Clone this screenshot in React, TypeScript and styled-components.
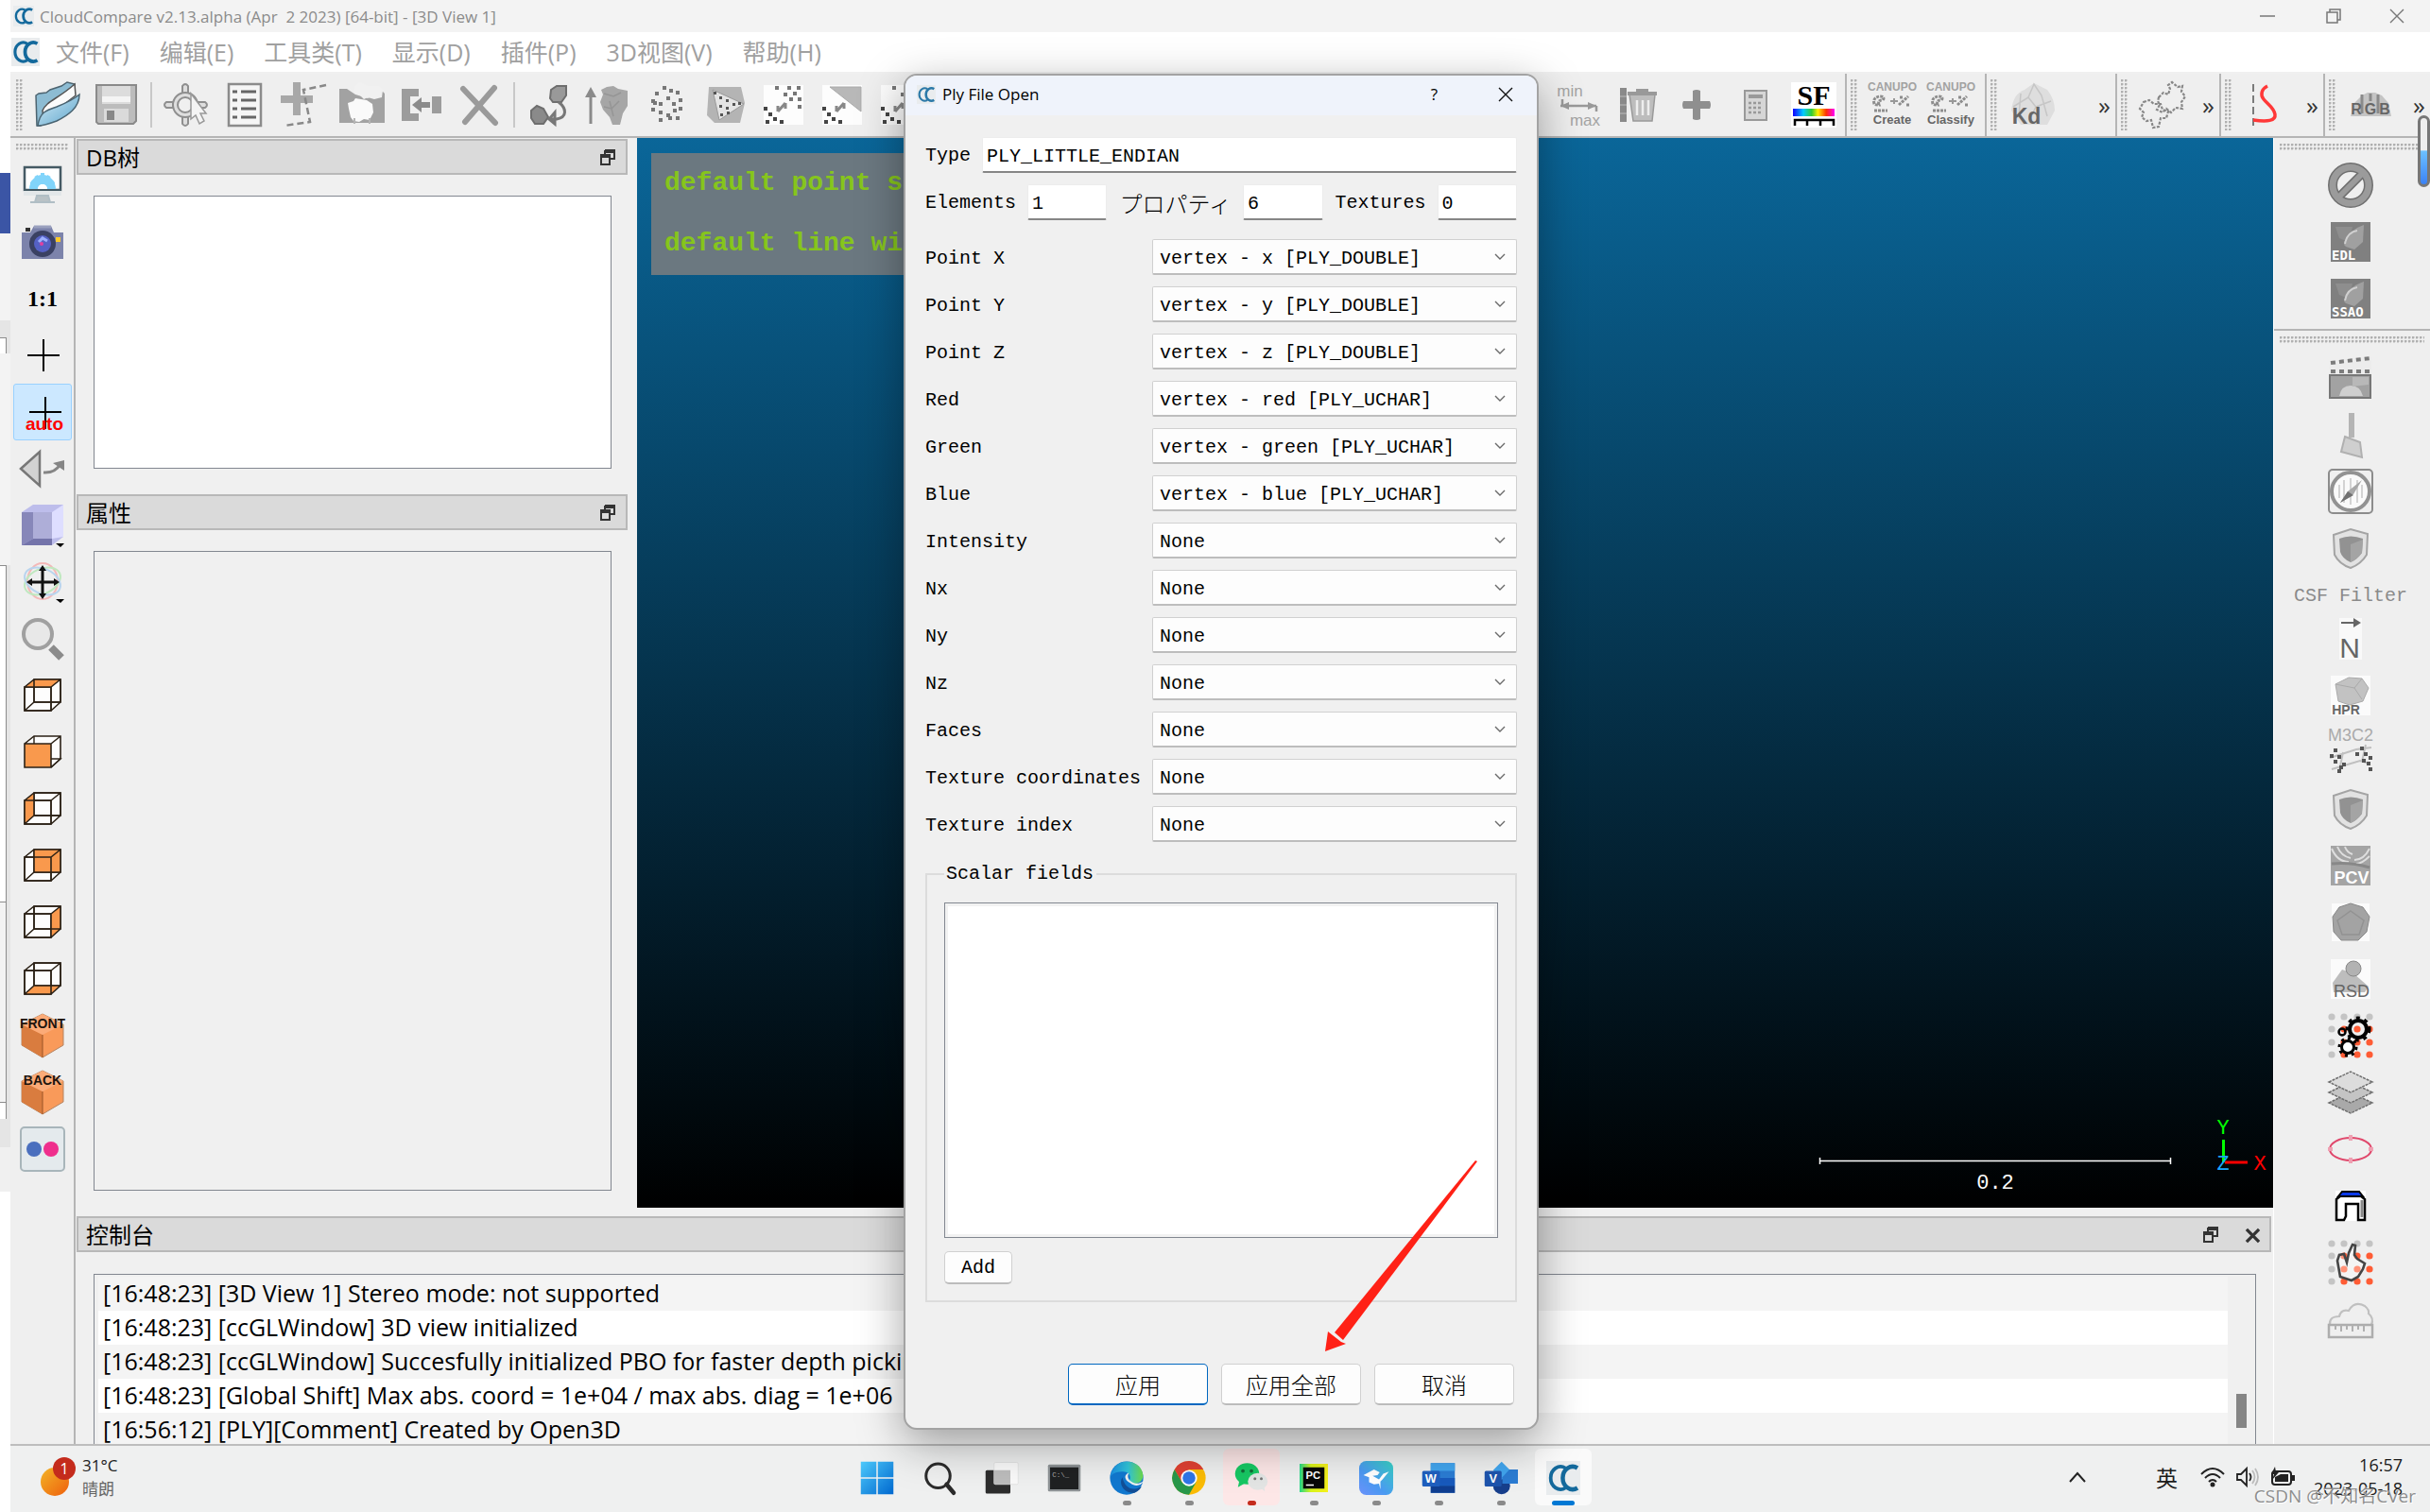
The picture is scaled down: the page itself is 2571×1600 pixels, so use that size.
import React, { ReactNode } from "react";
import styled, { createGlobalStyle } from "styled-components";

const ui = `"Open Sans", "Noto Sans CJK SC", sans-serif`;
const mono = `"Liberation Mono", "Noto Sans CJK SC", monospace`;

const GlobalStyle = createGlobalStyle`
  * { box-sizing: border-box; }
  body { margin: 0; background: #fff; font-family: ${ui}; overflow: hidden; }
  button, input, select { font: inherit; color: inherit; }
  svg { display: block; overflow: visible; }
`;

/* ---------- frame ---------- */
const Desktop = styled.div`
  display: flex;
  height: 100vh;
  position: relative;
`;
const Behind = styled.div`
  width: 11px;
  flex: none;
  display: flex;
  flex-direction: column;
`;
const Slice = styled.div<{ $h: number; $c: string; $edge?: boolean }>`
  height: ${p => p.$h}px;
  flex: none;
  background: ${p => p.$c};
  border-right: ${p => (p.$edge ? "4px solid #e5e5e5" : "none")};
  box-shadow: ${p => (p.$edge ? "inset -1px 0 #8c8c8c, inset 0 1px #8c8c8c" : "none")};
`;
const Screen = styled.div`
  flex: 1;
  min-width: 0;
  display: flex;
  flex-direction: column;
`;
const TitleBar = styled.header`
  height: 34px;
  flex: none;
  display: flex;
  align-items: center;
  background: #f3f3f3;
  color: #8b8b8b;
  padding: 0 27px 0 3px;
  gap: 6px;
  font-size: 17px;
  white-space: pre;
`;
const Spacer = styled.div`flex: 1;`;
const WindowButtons = styled.div`
  display: flex;
  gap: 48px;
`;
const PlainButton = styled.button`
  border: 0;
  padding: 0;
  background: none;
  display: flex;
  align-items: center;
  justify-content: center;
`;
const MenuBar = styled.nav`
  height: 44px;
  flex: none;
  display: flex;
  align-items: center;
  gap: 32px;
  background: #fff;
  border-bottom: 2px solid #f0f0f0;
  padding-left: 1px;
`;
const MenuItem = styled(PlainButton)`
  color: #a0a0a0;
  font-size: 25px;
  line-height: 42px;
`;
const MenuLead = styled.div`
  display: flex;
  align-items: center;
  gap: 17px;
`;

/* ---------- toolbars ---------- */
const TopBars = styled.div`
  height: 68px;
  flex: none;
  display: flex;
  background: #efefef;
  border-bottom: 2px solid #b5b5b5;
`;
const BarGroup = styled.div<{ $w?: number }>`
  ${p => (p.$w ? `width: ${p.$w}px; flex: none;` : "flex: 1; min-width: 0;")}
  display: flex;
  align-items: center;
  padding: ${p => (p.$w ? "0 0 0 4px" : "0 2px 0 6px")};
  border-right: 2px solid #b5b5b5;
  &:last-child { border-right: 0; }
`;
const Grip = styled.div<{ $flat?: boolean }>`
  flex: none;
  width: ${p => (p.$flat ? "auto" : "8px")};
  height: ${p => (p.$flat ? "8px" : "54px")};
  margin: ${p => (p.$flat ? "6px 6px 6px" : "0 5px 0 0")};
  background: radial-gradient(circle at 1px 1px, #b0b0b0 1px, transparent 2px) 0 0 / 4px 4px;
`;
const ToolButton = styled(PlainButton)`
  flex: none;
  width: 62px;
  height: 60px;
`;
const Separator = styled.div`
  width: 2px;
  height: 48px;
  margin: 0 5px;
  background: #c8c8c8;
`;
const More = styled(PlainButton)`
  margin-left: auto;
  padding-right: 5px;
  font-size: 26px;
  line-height: 30px;
  color: #333;
`;
const Body = styled.div`
  flex: 1;
  min-height: 0;
  display: flex;
  background: #f0f0f0;
`;
const SideBar = styled.aside<{ $w: number; $right?: boolean }>`
  width: ${p => p.$w}px;
  flex: none;
  display: flex;
  flex-direction: column;
  background: #efefef;
  border-right: ${p => (p.$right ? "none" : "2px solid #b5b5b5")};
  border-left: ${p => (p.$right ? "1px solid #fff" : "none")};
`;
const SideButton = styled(PlainButton)<{ $on?: boolean }>`
  flex: none;
  width: ${p => (p.$on ? "62px" : "auto")};
  height: 60px;
  margin: 0 ${p => (p.$on ? "auto" : "0")};
  flex-direction: column;
  background: ${p => (p.$on ? "#cce8ff" : "none")};
  border: ${p => (p.$on ? "1px solid #99d1ff" : "0")};
  border-radius: 3px;
  ${SideBar} > &:not([aria-pressed="true"]) { align-self: stretch; }
`;
const SideText = styled.button`
  border: 0;
  background: none;
  padding: 4px 0 0;
  height: 36px;
  flex: none;
  font-family: ${mono};
  font-size: 20px;
  color: #8a8a8a;
`;
const SideRule = styled.hr`
  width: 100%;
  height: 2px;
  margin: 2px 0 0;
  border: 0;
  flex: none;
  background: #b5b5b5;
`;
const PluginStack = styled.div`
  display: flex;
  flex-direction: column;
  padding-right: 3px;
`;

/* ---------- docks ---------- */
const Center = styled.main`
  flex: 1;
  min-width: 0;
  display: flex;
  flex-direction: column;
`;
const Upper = styled.div`
  flex: 1;
  min-height: 0;
  display: flex;
`;
const LeftDock = styled.div`
  width: 594px;
  flex: none;
  display: flex;
  flex-direction: column;
  padding: 1px 10px 0 1px;
`;
const DockHeader = styled.h2`
  margin: 0;
  height: 38px;
  flex: none;
  display: flex;
  align-items: center;
  gap: 28px;
  padding: 2px 10px 0 8px;
  font-size: 24px;
  line-height: 32px;
  font-weight: 400;
  background: #dadada;
  border: 2px solid #b8b8b8;
  color: #000;
`;
const DockBody = styled.div<{ $grow?: boolean; $fill: string }>`
  flex: ${p => (p.$grow ? "1" : "none")};
  height: ${p => (p.$grow ? "auto" : "289px")};
  margin: ${p => (p.$grow ? "22px 17px 18px 18px" : "22px 17px 27px 18px")};
  border: 1px solid #828790;
  background: ${p => p.$fill};
`;
const View = styled.section`
  flex: 1;
  min-width: 0;
  position: relative;
  background: linear-gradient(#0a6699, #000);
  padding: 16px 15px;
`;
const Notice = styled.div`
  width: 420px;
  height: 129px;
  padding-left: 14px;
  background: #6b7880;
  color: #86c51c;
  font-family: ${mono};
  font-weight: 700;
  font-size: 28px;
  line-height: 64px;
  white-space: pre;
  overflow: hidden;
`;
const ScaleOverlay = styled.svg`
  position: absolute;
  right: 0;
  bottom: 0;
  font-family: ${mono};
`;
const Console = styled.section`
  height: 250px;
  flex: none;
  padding: 9px 2px 0 1px;
  display: flex;
  flex-direction: column;
  overflow: hidden;
`;
const LogBox = styled.div`
  flex: 1;
  margin: 23px 16px 0 18px;
  border: 1px solid #828790;
  border-bottom: 0;
  padding: 2px 0 0 4px;
  display: flex;
  overflow: hidden;
`;
const LogList = styled.ul`
  flex: 1;
  margin: 0;
  padding: 0;
  list-style: none;
  background: #fff;
  height: 180px;
`;
const LogLine = styled.li`
  height: 36px;
  line-height: 34px;
  padding-left: 5px;
  font-size: 25px;
  white-space: pre;
  &:nth-child(odd) { background: #f4f4f4; }
`;
const LogScroll = styled.div`
  width: 29px;
  display: flex;
  justify-content: center;
  padding-top: 124px;
`;
const LogThumb = styled.div`
  width: 11px;
  height: 36px;
  background: #858585;
`;
const EdgeThumb = styled.div`
  position: absolute;
  right: 0;
  top: 122px;
  width: 13px;
  height: 76px;
  border: 3px solid #777;
  border-radius: 7px;
  background: linear-gradient(#eee 48%, #6cc0ff 50%, #3b82f6);
`;

/* ---------- dialog ---------- */
const Dialog = styled.form`
  position: absolute;
  left: 956px;
  top: 78px;
  width: 672px;
  border: 2px solid #a3a3a3;
  border-radius: 14px;
  background: #f0f0f0;
  font-family: ${mono};
  font-size: 20px;
  box-shadow: 0 14px 48px rgba(0, 0, 0, 0.36);
  padding-bottom: 24px;
`;
const DialogTitle = styled.div`
  height: 42px;
  display: flex;
  align-items: center;
  gap: 7px;
  padding: 0 25px 3px 12px;
  background: #eff3fb;
  border-radius: 12px 12px 0 0;
  font-family: ${ui};
  font-size: 17px;
`;
const DialogBody = styled.div`
  padding: 23px 21px 0;
`;
const FieldRow = styled.div`
  display: flex;
  align-items: center;
  height: 38px;
  margin-bottom: 12px;
`;
const Label = styled.label<{ $gap?: boolean; $kana?: boolean }>`
  margin-left: ${p => (p.$gap ? "13px" : "0")};
  margin-right: 12px;
  padding-top: 2px;
  font-size: ${p => (p.$kana ? "24px" : "20px")};
  line-height: 36px;
  font-family: ${p => (p.$kana ? `"Noto Sans CJK JP", sans-serif` : mono)};
  font-weight: ${p => (p.$kana ? 300 : 400)};
`;
const TextBox = styled.input`
  flex: 1;
  width: 0;
  height: 38px;
  border: 1px solid #ececec;
  border-bottom: 2px solid #868686;
  border-radius: 2px;
  background: #fff;
  padding: 4px 4px 0;
  outline: 0;
`;
const Mappings = styled.div`
  display: grid;
  grid-template-columns: 240px 1fr;
  row-gap: 12px;
  margin-top: 20px;
`;
const MapLabel = styled.label`
  line-height: 42px;
  height: 38px;
  white-space: nowrap;
`;
const SelectWrap = styled.div`
  display: grid;
  align-items: center;
  & > * { grid-area: 1 / 1; }
  & > svg { justify-self: end; margin-right: 12px; pointer-events: none; }
`;
const Select = styled.select`
  appearance: none;
  height: 38px;
  width: 100%;
  border: 1px solid #d0d0d0;
  border-bottom: 2px solid #bdbdbd;
  border-radius: 2px;
  background: #fdfdfd;
  padding: 3px 7px 0;
  outline: 0;
`;
const Fields = styled.fieldset`
  margin: 21px 0 0;
  padding: 17px 18px 17px;
  border: 2px solid #dcdcdc;
`;
const Legend = styled.legend`
  padding: 0 3px 0 2px;
  line-height: 26px;
`;
const FieldList = styled.div`
  height: 355px;
  border: 1px solid #828790;
  background: #fff;
  box-shadow: inset 0 0 0 3px #f2f2f2;
`;
const Button = styled.button<{ $w: number; $main?: boolean }>`
  width: ${p => p.$w}px;
  height: ${p => (p.$w > 100 ? 44 : 35)}px;
  border: 1px solid ${p => (p.$main ? "#0067c0" : "#d0d0d0")};
  border-bottom-width: 2px;
  border-bottom-color: ${p => (p.$main ? "#0067c0" : "#bcbcbc")};
  border-radius: 5px;
  background: #fdfdfd;
  padding: 0;
`;
const AddRow = styled.div`
  margin-top: 14px;
`;
const Actions = styled.div`
  display: flex;
  justify-content: flex-end;
  gap: 14px;
  padding-right: 3px;
  margin-top: 65px;
  font-size: 24px;
  font-weight: 300;
`;
const Arrow = styled.svg`
  position: absolute;
  right: 61px;
  bottom: 81px;
  pointer-events: none;
`;

/* ---------- taskbar ---------- */
const TaskBar = styled.footer`
  height: 72px;
  flex: none;
  display: grid;
  grid-template-columns: 1fr auto 1fr;
  align-items: center;
  background: #eff0f0;
  border-top: 2px solid #bdbdbd;
  padding-bottom: 5px;
  position: relative;
`;
const Weather = styled.div`
  display: flex;
  align-items: center;
  gap: 7px;
  padding-left: 31px;
  font-size: 17px;
  line-height: 25px;
  color: #222;
`;
const Second = styled.div`
  color: #666;
`;
const Apps = styled.div`
  display: flex;
`;
const AppButton = styled(PlainButton)<{ $bg?: string; $dot?: string; $wide?: boolean }>`
  width: 60px;
  height: 60px;
  margin: 0 3px;
  flex-direction: column;
  justify-content: flex-end;
  gap: 6px;
  border-radius: 6px;
  background: ${p => p.$bg || "none"};
  &::after {
    content: "";
    width: ${p => (p.$wide ? "24px" : "9px")};
    height: 5px;
    border-radius: 3px;
    background: ${p => p.$dot || "transparent"};
  }
`;
const AppGlyph = styled.span`
  & > svg { width: 36px; height: 36px; }
`;
const Tray = styled.div`
  display: flex;
  align-items: center;
  justify-content: flex-end;
  gap: 12px;
  padding-right: 29px;
  font-size: 23px;
  color: #1b1b1b;
`;
const InputMode = styled(PlainButton)`
  margin-right: 12px;
`;
const TrayGap = styled.div`
  width: 50px;
`;
const Clock = styled.time`
  font-size: 18px;
  line-height: 25px;
  text-align: right;
  margin-left: 8px;
`;
const Watermark = styled.div`
  position: absolute;
  right: 15px;
  bottom: 4px;
  font-size: 19px;
  line-height: 26px;
  color: #8d8d8d;
  text-shadow: 1px 1px #fff;
`;

/* ---------- icons ---------- */
type IconProps = { s?: number; children?: ReactNode };
const I = ({ s = 48, children }: IconProps) => (
  <svg width={s} height={s} viewBox="0 0 48 48" fill="none" aria-hidden="true">{children}</svg>
);
const T = ({ x, y, z, f = "#666", b = true, children }: { x: number; y: number; z: number; f?: string; b?: boolean; children: string }) => (
  <text x={x} y={y} fontSize={z} fill={f} fontWeight={b ? 700 : 400} textAnchor="middle" fontFamily="Liberation Sans, sans-serif">{children}</text>
);
const Logo = ({ s = 26, c = "#13699c" }: { s?: number; c?: string }) => (
  <I s={s}>
    <rect width="48" height="48" fill="#e9ecee" />
    <path d="M27 10A14 16 0 1 0 27 38" stroke={c} strokeWidth="5" />
    <path d="M44 10A14 16 0 1 0 44 38" stroke={c} strokeWidth="6" />
  </I>
);
const Dots = ({ pts, f = "#666", s = 4 }: { pts: number[][]; f?: string; s?: number }) => (
  <>{pts.map(([x, y], i) => <rect key={i} x={x} y={y} width={s} height={s} fill={f} />)}</>
);
const Restore = () => (
  <svg width="18" height="20" viewBox="0 0 18 20" aria-hidden="true">
    <path d="M6 2h10v9h-4M6 2v5M5 3h11" fill="none" stroke="#333" strokeWidth="2" />
    <path d="M2 8h9v9H2z" fill="none" stroke="#333" strokeWidth="2" />
    <path d="M1 8h11M6 3h11" stroke="#333" strokeWidth="4" />
  </svg>
);
const Chevron = () => (
  <svg width="12" height="8" viewBox="0 0 12 8" aria-hidden="true">
    <path d="M1 1l5 5 5-5" fill="none" stroke="#6a6a6a" strokeWidth="1.4" />
  </svg>
);

const Folder = () => (
  <I>
    <defs><linearGradient id="fo" x1="0" y1="0" x2="1" y2="1"><stop stopColor="#d4ecf7" /><stop offset="1" stopColor="#5da5cc" /></linearGradient></defs>
    <path d="M1 14l3-2 8-1 4-3 12-4 6-4 8 2-2 9L6 46H2z" fill="#8dbcd3" stroke="#4d6470" strokeWidth="1.5" />
    <path d="M8 30C12 20 24 18 42 2l1 12L9 40z" fill="#fbfbfb" stroke="#555" strokeWidth="1.5" />
    <path d="M3 46c2-14 8-16 20-20 10-4 18-8 24-13 0 14-12 22-24 28C15 44 9 46 3 46z" fill="url(#fo)" stroke="#4a6472" strokeWidth="1.5" />
  </I>
);
const Floppy = () => (
  <I>
    <path d="M3 3h42v38l-3 3H5l-2-2z" fill="#bcbcbc" stroke="#8a8a8a" strokeWidth="2" />
    <path d="M9 4h30v19H9z" fill="#dcdcdc" /><path d="M9 15h30v6H9z" fill="#f4f4f4" />
    <path d="M11 28h26v14H11z" fill="#dadada" /><path d="M14 30h8v10h-8z" fill="#888" />
  </I>
);
const Target = () => (
  <I>
    <g stroke="#8f8f8f" strokeWidth="2" fill="#dedede">
      <path d="M20 12V4q3-4 6 0v8zM20 36v8q3 4 6 0v-8zM10 21H3q-4 3 0 6h7zM37 21h7q4 3 0 6h-7z" />
      <circle cx="23" cy="24" r="13" /><circle cx="23" cy="24" r="8" fill="#f0f0f0" />
    </g>
    <path d="M29 12v27l5-4 4 9 5-3-4-8h6z" fill="#f4f4f4" stroke="#999" strokeWidth="1.5" />
  </I>
);
const ListIcon = () => (
  <I>
    <rect x="7" y="2" width="34" height="44" fill="#f5f5f5" stroke="#8b8b8b" strokeWidth="2.5" />
    {[10, 19, 28, 37].map(y => <path key={y} d={`M11 ${y}h5M20 ${y}h16`} stroke="#666" strokeWidth="3" />)}
  </I>
);
const PlusPath = () => (
  <I><path d="M0 14h13V0h8v14h13v8H21v13h-8V22H0z" fill="#a8a8a8" /><path d="M48 3L24 8l7 34L4 46" stroke="#888" strokeWidth="2.5" strokeDasharray="7 4" /></I>
);
const Sheep = () => (
  <I>
    <path d="M0 7h8l9 6 13 4 16-7 2 2v31H0z" fill="#a2a2a2" />
    <path d="M17 3l5-3 8 4h12l4 4-1 8-8 2-7-2-4 2-4-4-5-2-2-3z" fill="#f1f1f1" />
    <path d="M9 22l6-2 2-3 12 2 6 4 1 9-4 8-6-1-5 3-6-1-3-4-2-9z" fill="#fafafa" />
    <path d="M16 38v6M32 38v6" stroke="#b4b4b4" strokeWidth="2" />
  </I>
);
const Subtract = () => (
  <I><path d="M4 7h18v8h-9v18h9v8H4z" fill="#9c9c9c" /><path d="M36 15h10v18H36z" fill="#9c9c9c" /><path d="M15 24l10-8v5h9v6h-9v5z" fill="#8b8b8b" /></I>
);
const Cross = () => <I><path d="M7 7l34 36M40 6L9 42" stroke="#9a9a9a" strokeWidth="6" strokeLinecap="round" /></I>;
const Curve = () => (
  <I><path d="M26 8l6-4h10v10l-5 7H28l-3-4z" fill="#999" stroke="#6e6e6e" strokeWidth="2" /><path d="M5 30l6-5 7 3 5 9-5 7H9l-4-6z" fill="#8a8a8a" stroke="#6e6e6e" strokeWidth="2" /><path d="M34 21c9 7 9 16-2 18h-6M30 32v12l-6-5z" stroke="#777" strokeWidth="3" /></I>
);
const Rock = () => (
  <I><path d="M6 44V12" stroke="#8a8a8a" strokeWidth="3" /><path d="M0 16L6 5l6 11z" fill="#8a8a8a" /><path d="M17 8l6-3 7-1 5 3 10 2v16l-5 8-3 12h-8l-3-8-7-8-3-8 3-8z" fill="#a6a6a6" /><path d="M20 12l10 3 8-4M20 26l8 2 8-8M26 20l4 16" stroke="#959595" strokeWidth="1.500" /></I>
);
const Sample = () => <I><Dots f="#777" pts={[[20, 4], [27, 7], [12, 10], [34, 9], [8, 18], [24, 15], [37, 17], [16, 21], [30, 21], [8, 27], [37, 26], [16, 30], [24, 33], [34, 36], [26, 36], [16, 38], [10, 20], [31, 28]]} /></I>;
const SampleBox = () => (
  <I><path d="M7 5h34l4 17-5 21H13l-8-8z" fill="#b4b4b4" /><path d="M11 8l33 15L18 40z" fill="#e4e4e4" stroke="#999" /><Dots s={3} f="#555" pts={[[12, 10], [18, 15], [25, 18], [18, 24], [25, 26], [32, 22], [19, 33], [26, 31], [38, 21]]} /></I>
);
const Reg = ({ tri }: { tri?: boolean }) => (
  <I><rect x="3" y="3" width="42" height="42" fill="#fdfdfd" />{tri ? <path d="M11 5h33v26z" fill="#b8b8b8" stroke="#aaa" /> : <Dots s={4} f="#777" pts={[[15, 4], [28, 4], [38, 4], [24, 11], [34, 10], [39, 16], [30, 16], [39, 24]]} />}<Dots s={4} f="#444" pts={[[3, 26], [8, 32], [5, 40], [13, 37], [20, 40]]} /><path d="M18 31l8-9M18 31v-6M26 22v6" stroke="#888" strokeWidth="3" /></I>
);
const MinMax = () => <I><T x={14} y={15} z={17} f="#a4a4a4" b={false}>min</T><T x={30} y={46} z={17} f="#a4a4a4" b={false}>max</T><path d="M4 25h38M42 25v6M6 25v-7" stroke="#999" strokeWidth="2.500" /><path d="M4 25l9-4v8zM42 25l-9-4v8z" fill="#999" /></I>;
const Trash = () => (
  <I><path d="M5 6h7v36H5z" fill="#8a8a8a" /><path d="M5 15h7M5 24h7M5 33h7" stroke="#bbb" /><path d="M15 13h27l-3 28H19z" fill="#bdbdbd" stroke="#999" strokeWidth="1.5" /><path d="M13 12h31M22 9h13" stroke="#999" strokeWidth="4" /><path d="M23 19v16M29 19v16M35 19v16" stroke="#eee" strokeWidth="2.5" /></I>
);
const Plus = () => <I><path d="M20 9q4-2 8 0v11h10q2 4 0 8H28v11q-4 2-8 0V28H10q-2-4 0-8h10z" fill="#8f8f8f" /></I>;
const Calc = () => <I><rect x="13" y="9" width="23" height="31" fill="#d6d6d6" stroke="#999" strokeWidth="2" /><path d="M17 15h15" stroke="#999" strokeWidth="4" />{[22, 27, 32].map(y => <path key={y} d={`M17 ${y}h15`} stroke="#999" strokeWidth="2.5" strokeDasharray="3 2" />)}</I>;
const SF = () => (
  <I>
    <defs><linearGradient id="sf"><stop stopColor="#10f" /><stop offset=".25" stopColor="#0cf" /><stop offset=".45" stopColor="#3c3" /><stop offset=".6" stopColor="#fe0" /><stop offset=".8" stopColor="#f30" /><stop offset="1" stopColor="#f0f" /></linearGradient></defs>
    <rect width="48" height="48" fill="#fff" />
    <text x="24" y="24" fontSize="30" textAnchor="middle" fontWeight="700" fontFamily="Liberation Serif, serif" fill="#000">SF</text>
    <rect x="2" y="28" width="44" height="8" fill="url(#sf)" /><path d="M4 46v-6h41v6M17 40v6M31 40v6" stroke="#000" strokeWidth="2.5" />
  </I>
);
const Canupo = ({ word }: { word: string }) => (
  <I><T x={24} y={9} z={12} f="#a2a2a2">CANUPO</T><path d="M5 23q-2-7 6-8 6 0 3 4-6 0-4 5-5 0-5-1zM5 30h14M31 24l10-9M32 16h3M39 24h3" stroke="#8d8d8d" strokeWidth="3" strokeDasharray="3 1" /><path d="M22 20h8M26 17v6" stroke="#999" strokeWidth="2" /><T x={24} y={44} z={13} f="#666">{word}</T></I>
);
const Kd = () => <I><path d="M2 30Q4 12 16 8L26 1l14 7q8 10 8 22l-8 15H12z" fill="#dedede" /><path d="M4 26l16-10 8 10 16-6M20 16l6-14 8 12 6 22M28 26l-6 12M12 12l-2 24" stroke="#c6c6c6" strokeWidth="1.5" /><T x={18} y={44} z={23} f="#666">Kd</T></I>;
const Puzzle = () => <I><path d="M20 16l5-5 5 2 2-6-2-4 4-3 6 5 5-1-1 6 4 5-4 6 1 7-7-1-5 5-5-4-4 4-6-3 3-5-2-4zM4 21l6-2 5 4 7 0 2 6 6 2-2 7-6 0-2 9-6 1-2-8-5 1-5-4 2-5-4-4z" stroke="#888" strokeWidth="2.2" strokeDasharray="3 1.5" /></I>;
const Section = () => <I><path d="M10 2v44" stroke="#555" strokeWidth="1.5" strokeDasharray="8 4" /><path d="M25 4c-6 3-8 9-4 14s11 9 12 16-8 8-23 6" stroke="#ff3838" strokeWidth="3.5" /></I>;
const RGB = () => <I><path d="M3 36l4-14 8-8 6-3h8l7 3 7 8 3 14z" fill="#c4c4c4" /><path d="M15 33V13M32 33V13M24 12v8" stroke="#8a8a8a" strokeWidth="3" /><T x={9} y={34} z={16}>R</T><T x={24} y={34} z={16}>G</T><T x={39} y={34} z={16}>B</T></I>;

const Monitor = () => <I><rect x="5" y="5" width="38" height="24" fill="#fff" stroke="#455a64" strokeWidth="2.5" /><path d="M10 28a14 15 0 0 1 28 0h-9a5 5 0 0 0-10 0z" fill="#81d4fa" /><path d="M12 20l5 4M17 14l4 6M24 11v6M31 14l-4 6M36 20l-5 4" stroke="#81d4fa" strokeWidth="4" /><path d="M19 28a5 5 0 0 1 10 0z" fill="#fff" /><path d="M4 30h40v5H4z" fill="#e3e7e9" /><path d="M18 35h12l2 7H16zM11 42h26" fill="#b9c2c6" stroke="#b0bec5" strokeWidth="2" /></I>;
const Camera = () => <I><path d="M2 14h9l4-7h18l3 7h10v28H2z" fill="#7c83ab" /><path d="M15 8h18" stroke="#9aa0be" strokeWidth="3" /><circle cx="24" cy="26" r="14" fill="#3a4163" /><circle cx="24" cy="26" r="9" fill="#5561c5" /><path d="M20 24l4-4 5 3" stroke="#9cb0ff" strokeWidth="3" /><circle cx="23" cy="26" r="2" fill="#e040a0" /><rect x="38" y="19" width="5" height="5" fill="#ffca28" /><path d="M6 11h5" stroke="#333" strokeWidth="4" /></I>;
const OneOne = () => <I><text x="24" y="32" fontSize="24" textAnchor="middle" fontWeight="700" fontFamily="Liberation Serif, serif" fill="#000">1:1</text></I>;
const Hair = () => <I><path d="M8 24h34M25 7v34" stroke="#000" strokeWidth="2" /></I>;
const Auto = () => <I><path d="M10 24h34M27 8v34" stroke="#000" strokeWidth="2" /><T x={26} y={43} z={19} f="#f00">auto</T></I>;
const Flip = () => <I><path d="M1 24L21 6v36z" fill="#d2d2d2" stroke="#777" strokeWidth="2.5" /><path d="M25 28q12 1 18-9" stroke="#858585" strokeWidth="3" /><path d="M35 18l12-3v11z" fill="#858585" /></I>;
const Cube = () => <I><path d="M2 10L14 2h32v34l-12 9H2z" fill="#bdbdeb" /><path d="M2 10l12 0v28L2 45z" fill="#8787b9" /><path d="M14 10h20v28H14z" fill="#aeaed8" /><path d="M34 10L46 2v34l-12 2z" fill="#dedeff" /><path d="M2 45l12-7h20v7z" fill="#7474aa" /><path d="M38 43h9l-4 4z" fill="#000" /></I>;
const Move = () => <I><ellipse cx="24" cy="23" rx="16" ry="19" stroke="#f4b8b8" strokeWidth="2" /><ellipse cx="24" cy="23" rx="20" ry="13" stroke="#bfe8bf" strokeWidth="2" transform="rotate(-25 24 23)" /><ellipse cx="24" cy="23" rx="20" ry="13" stroke="#b8d4ee" strokeWidth="2" transform="rotate(25 24 23)" /><path d="M24 9v29M10 24h28" stroke="#111" strokeWidth="3" /><path d="M20 12l4-6 4 6zM20 36l4 6 4-6zM13 20l-6 4 6 4zM36 20l6 4-6 4z" fill="#111" /><path d="M38 42h9l-4 4z" fill="#000" /></I>;
const Mag = () => <I><circle cx="19" cy="19" r="15" fill="#e8e8e8" stroke="#a0a0a0" strokeWidth="4" /><path d="M33 33l11 11" stroke="#8b8b8b" strokeWidth="8" /></I>;
const faces: Record<string, string> = {
  top: "M5 15L15 7h28L33 15z", front: "M5 15h28v25H5z", left: "M5 15L15 7v24L5 40z",
  back: "M15 7h28v24H15z", right: "M33 15L43 7v24l-10 9z", bottom: "M5 40l10-9h28l-10 9z",
};
const Box = ({ face }: { face: string }) => <I><path d="M5 15L15 7h28v24l-10 9H5z" fill="#fdfdfd" /><path d={face === "front" ? "M15 7v8M15 31h28L33 40M15 31" : "M5 15h28v25H5zM15 7h28v24H15z"} stroke="#2b2116" strokeWidth="1.4" /><path d={faces[face]} fill="#f9994d" /><path d={`M5 15h28v25H5zM5 15L15 7h28v24l-10 9M33 15L43 7${face === "front" ? "" : "M15 7v24h28M5 40l10-9"}`} stroke="#2b2116" strokeWidth="1.6" /></I>;
const Named = ({ word }: { word: string }) => <I><path d="M2 12L24 1l22 11v22L24 47 2 34z" fill="#f99a5a" stroke="#b58563" /><path d="M2 12l22 11v24L2 34z" fill="#d97c3f" /><path d="M24 23v24" stroke="#9a5427" /><path d="M2 12L24 1l22 11-22 11z" fill="#fbab78" /><T x={24} y={16} z={14} f="#1d140d">{word}</T></I>;
const Flickr = () => <I><rect x="1" y="1" width="46" height="46" rx="4" fill="#e4eaed" stroke="#a8b5ba" strokeWidth="2" /><circle cx="15" cy="24" r="8" fill="#4a6fbe" /><circle cx="33" cy="24" r="8" fill="#ef2f8d" /></I>;

const NoSign = () => <I><circle cx="24" cy="24" r="19" stroke="#707070" strokeWidth="10" /><path d="M11 37L37 11" stroke="#707070" strokeWidth="9" /><circle cx="24" cy="24" r="19" stroke="#9b9b9b" strokeWidth="7" /><path d="M11 37L37 11" stroke="#9b9b9b" strokeWidth="6" /></I>;
const Shade = ({ word }: { word: string }) => <I><rect x="3" y="3" width="42" height="42" fill="#808080" /><path d="M8 8h18l-4 16-10-4z" fill="#8e8e8e" /><path d="M17 27Q20 12 38 6L37 24l-9 8-9-3z" fill="#a0a0a0" /><path d="M18 26q2-12 13-14" stroke="#d0d0d0" strokeWidth="2" /><text x="4" y="43" fontSize="14" fontWeight="700" fill="#fff" fontFamily="DejaVu Sans Mono, monospace">{word}</text></I>;
const Clapper = () => <I><path d="M1 21L2 6l44-5v20z" fill="#ececec" /><path d="M3 8l42-5M3 17h42" stroke="#7c7c7c" strokeWidth="4" strokeDasharray="5 4" /><rect x="2" y="21" width="43" height="24" fill="#a2a2a2" stroke="#777" strokeWidth="2" /><path d="M12 43q2-11 12-11t13 11z" fill="#cfcfcf" /><path d="M26 23h17v8l-17 2z" fill="#b8b8b8" /></I>;
const Broom = () => <I><path d="M22 1h6v26h-6z" fill="#b4b4b4" /><path d="M18 26l16 6 2 16-22-6z" fill="#cfcfcf" stroke="#b0b0b0" strokeWidth="2" /></I>;
const Compass = () => <I><rect x="1" y="1" width="46" height="46" rx="4" stroke="#8c8c8c" strokeWidth="2" /><circle cx="24" cy="24" r="20" fill="#fafafa" stroke="#929292" strokeWidth="4" /><path d="M12 17v14M17 12v24M24 10v28M31 12v24M36 17v14" stroke="#c6c6c6" strokeWidth="1.5" /><path d="M13 36l8-12L36 12l-9 15z" fill="#a8a8a8" /><path d="M13 36l8-12 6 4z" fill="#707070" /></I>;
const Shield = () => <I><path d="M6 10l18-6 18 5-1 22q-6 10-17 14Q12 41 7 31z" fill="#e2e2e2" stroke="#a4a4a4" strokeWidth="2" /><path d="M12 14q12-5 25 0l-1 15q-5 7-12 10-9-4-11-11z" fill="#929292" /><path d="M24 20l13-5-1 14q-5 7-12 10z" fill="#a4a4a4" /></I>;
const Normal = () => <I><rect x="12" y="2" width="24" height="44" fill="#f9f9f9" /><path d="M14 7h16" stroke="#666" strokeWidth="2" /><path d="M27 2l8 5-8 5z" fill="#666" /><T x={23} y={44} z={30} b={false}>N</T></I>;
const Hpr = () => <I><rect x="3" y="3" width="42" height="42" fill="#fbfbfb" /><path d="M8 12l14-7 14 1 7 10-6 14-14 4-12-4z" fill="#c2c2c2" stroke="#aaa" /><path d="M8 12l20 4 8-10M28 16l8 12" stroke="#aaa" /><T x={19} y={44} z={14}>HPR</T></I>;
const M3 = () => <I><T x={24} y={12} z={18} f="#aaa" b={false}>M3C2</T><path d="M2 30l28-9 16-2M4 42l30-9 10 3M12 44l4-20M36 34l4-18" stroke="#c0c0c0" strokeWidth="2" /><Dots s={4} f="#555" pts={[[6, 20], [2, 26], [10, 27], [6, 32], [15, 35], [10, 42], [12, 38], [29, 24], [34, 18], [38, 24], [43, 28], [41, 34], [43, 40], [36, 31]]} /></I>;
const Pcv = () => <I><rect x="3" y="3" width="42" height="42" fill="#a4a4a4" /><path d="M4 6q6 14 18 14M10 4q4 10 14 12M18 4q2 6 8 8M44 6q-6 12-16 12M44 14q-8 8-14 8" stroke="#dedede" strokeWidth="2" /><path d="M4 22q20-2 40 4" stroke="#888" strokeWidth="3" /><T x={25} y={43} z={18} f="#fff">PCV</T></I>;
const Penta = () => <I><rect x="4" y="4" width="40" height="40" fill="#fbfbfb" /><path d="M24 4l13 4 7 10-3 16-9 9H14L6 34 5 18 12 8z" fill="#a3a3a3" stroke="#888" /><path d="M24 12l14 10-5 15H15L10 22z" stroke="#929292" strokeWidth="1.5" /></I>;
const Rsd = () => <I><rect x="3" y="3" width="42" height="42" fill="#fbfbfb" /><path d="M5 28l10-14 12 4 16 14-4 6H6z" fill="#bdbdbd" /><circle cx="27" cy="13" r="8" fill="#b2b2b2" stroke="#888" /><T x={25} y={43} z={18} b={false}>RSD</T></I>;
const Lattice = () => <>{[4, 17, 31, 44].map((y, r) => [4, 17, 31, 44].map((x, c) => <circle key={`${r}${c}`} cx={x} cy={y} r="3.6" fill={r && c ? "#ff5c35" : "#c4c4c4"} />))}</>;
const Gears = () => <I><Lattice /><circle cx="32" cy="17" r="9" stroke="#000" strokeWidth="4" /><circle cx="32" cy="17" r="12" stroke="#000" strokeWidth="3" strokeDasharray="4 5" /><circle cx="21" cy="36" r="6.5" fill="#fff" stroke="#000" strokeWidth="3" /><circle cx="21" cy="36" r="9" stroke="#000" strokeWidth="3" strokeDasharray="3 4" /><circle cx="15" cy="20" r="3.5" stroke="#000" strokeWidth="2.5" /></I>;
const Layers = () => <I>{[35, 24, 13].map((y, i) => <path key={y} d={`M1 ${y}l23-11 23 11-23 11z`} fill={["#a9a9a9", "#c4c4c4", "#dcdcdc"][i]} stroke="#6f6f6f" strokeWidth="1.5" strokeDasharray="3 1" />)}</I>;
const Ellipse = () => <I><ellipse cx="24" cy="24" rx="22" ry="12" stroke="#e0476b" strokeWidth="2" /><path d="M24 9v6M24 33v6M0 24h5M43 24h5" stroke="#efa0b2" strokeWidth="4" /></I>;
const Bridge = () => <I><rect x="8" y="8" width="32" height="32" fill="#fff" /><path d="M9 17l5-4h20l5 4v22h-7V22H19v13l-2 4h-8z" fill="#fff" stroke="#000" strokeWidth="2.5" /><path d="M15 9h18l4 5H11z" fill="#0a38e8" stroke="#000" strokeWidth="2" /><path d="M36 18v18" stroke="#888" strokeWidth="3" /></I>;
const Hand = () => <I><Lattice /><path d="M13 39l-3-17 2-6 5-1 3 9 2-10 4-9 3 1-1 10 3 4 8 5-2 6-5 8-7 4z" fill="#ffffff55" stroke="#454545" strokeWidth="2.6" /></I>;
const CloudRuler = () => <I><path d="M2 30q-1-9 10-9 2-8 10-6 6-11 17-5 5 4 4 8 6 5 3 12" stroke="#c0c0c0" strokeWidth="2.2" /><rect x="1" y="30" width="46" height="13" stroke="#adadad" strokeWidth="2.5" /><path d="M8 30v5M14 30v7M20 30v5M26 30v7M32 30v5M38 30v7" stroke="#b0b0b0" strokeWidth="2" /></I>;

const Win = () => <I><defs><linearGradient id="wi" x1="0" y1="0" x2="1" y2="1"><stop stopColor="#4cc9fb" /><stop offset="1" stopColor="#0068cf" /></linearGradient></defs><path d="M1 1h22v22H1zM25 1h22v22H25zM1 25h22v22H1zM25 25h22v22H25z" fill="url(#wi)" /></I>;
const Search = () => <I><circle cx="22" cy="21" r="17" stroke="#2b2b2b" strokeWidth="4" /><path d="M34 33l10 12" stroke="#2b2b2b" strokeWidth="6" strokeLinecap="round" /></I>;
const TaskView = () => <I><rect x="1" y="13" width="35" height="33" rx="2" fill="#2d2d2d" /><rect x="13" y="2" width="34" height="31" rx="2" fill="#fafafa" stroke="#ddd" /><rect x="13" y="13" width="23" height="20" fill="#bdbdbd" /></I>;
const Cmd = () => <I><rect x="1" y="5" width="46" height="38" rx="2" fill="#8d9295" /><rect x="4" y="9" width="40" height="31" fill="#1f2122" /><text x="7" y="22" fontSize="10" fill="#aaa" fontFamily="Liberation Mono, monospace">C:\_</text></I>;
const Edge = () => <I><defs><linearGradient id="ed"><stop stopColor="#1a8fe3" /><stop offset=".55" stopColor="#32c5d8" /><stop offset="1" stopColor="#6ddb4a" /></linearGradient></defs><circle cx="24" cy="24" r="23.500" fill="#1178cf" /><path d="M1 22C3 8 14 0 25 1c14 0 23 11 22 21-1 9-11 12-18 9-3-2 0-4 0-8 0-5-5-9-12-8-8 0-14 4-16 7z" fill="url(#ed)" /><path d="M18 23c-6 10 3 23 17 22 6-2 9-7 10-9-14 8-24 1-27-13z" fill="#124f97" /><path d="M29 31c-3-2-6-3-7-8 0-3 3-6 5-6-3 6 0 11 7 14 6 2 10 0 14-3-3 7-12 9-19 3z" fill="#eff0f0" /></I>;
const Chrome = () => <I><circle cx="24" cy="24" r="23.500" fill="#fbbc05" /><path d="M3.600 12A23.500 23.500 0 0 1 44.400 12H24L14 30z" fill="#df4033" /><path d="M3.600 12A23.500 23.500 0 0 0 24 47.500L34 30 24 34 14 30z" fill="#28984a" /><circle cx="24" cy="24" r="11.500" fill="#fff" /><circle cx="24" cy="24" r="9" fill="#2f76e8" /></I>;
const Wechat = () => <I><ellipse cx="18" cy="18" rx="17" ry="15" fill="#17c763" /><path d="M7 28l-2 9 9-5z" fill="#17c763" /><circle cx="12" cy="14" r="2.500" fill="#136c39" /><circle cx="24" cy="14" r="2.500" fill="#136c39" /><ellipse cx="33" cy="29" rx="14" ry="12" fill="#e3e5e4" /><path d="M37 38l6 5-1-8z" fill="#e3e5e4" /><circle cx="29" cy="25" r="2" fill="#777" /><circle cx="38" cy="25" r="2" fill="#777" /></I>;
const PyCharm = () => <I><defs><linearGradient id="py"><stop stopColor="#21d789" /><stop offset=".4" stopColor="#d8f41b" /><stop offset="1" stopColor="#f6f01c" /></linearGradient></defs><rect x="4" y="4" width="40" height="40" fill="url(#py)" /><rect x="9" y="9" width="30" height="30" fill="#080808" /><T x={23} y={25} z={15} f="#fff">PC</T><path d="M13 34h11" stroke="#fff" strokeWidth="2" /></I>;
const Bird = () => <I><defs><linearGradient id="bi" x1="1" y1="0" x2="0" y2="1"><stop stopColor="#37d2c5" /><stop offset=".6" stopColor="#4b9af2" /><stop offset="1" stopColor="#6c92fb" /></linearGradient></defs><rect width="48" height="48" rx="10" fill="url(#bi)" /><path d="M6 20l15-8 8 4-3 4-7 1 9 5 6-8 8-3-9 11-3 3v11l-2-8-7 1-7-3v-7z" fill="#fff" /></I>;
const Word = () => <I><path d="M13 3h34v42H13z" fill="#2b7cd3" /><path d="M13 3h34v11H13z" fill="#41a5ee" /><path d="M13 24h34v11H13z" fill="#185abd" /><path d="M13 35h34v10H13z" fill="#103f91" /><rect x="1" y="14" width="25" height="22" rx="2" fill="#1f5fbf" /><T x={13} y={31} z={17} f="#fff">W</T></I>;
const Visio = () => <I><circle cx="25" cy="35" r="12" fill="#173f8c" /><path d="M25 1l12 12-12 14-12-14z" fill="#41a5ee" /><path d="M36 12h12v20H26V23z" fill="#2b7cd3" /><rect x="1" y="14" width="24" height="22" rx="2" fill="#1e54ad" /><T x={13} y={31} z={17} f="#fff">V</T></I>;

const leftTools: [string, ReactNode][] = [
  ["Display settings", <Monitor />], ["Render to file", <Camera />], ["Zoom 1:1", <OneOne />], ["Pick center", <Hair />],
  ["Auto-pick center", <Auto />], ["Flip", <Flip />], ["Projection", <Cube />], ["Pivot", <Move />], ["Zoom", <Mag />],
  ["Top", <Box face="top" />], ["Front face", <Box face="front" />], ["Left", <Box face="left" />], ["Back face", <Box face="back" />],
  ["Right", <Box face="right" />], ["Bottom", <Box face="bottom" />], ["Front view", <Named word="FRONT" />], ["Back view", <Named word="BACK" />], ["Stereo", <Flickr />],
];
const pluginTop: [string, ReactNode][] = [["Animation", <Clapper />], ["Broom", <Broom />], ["Compass", <Compass />], ["CSF", <Shield />]];
const pluginRest: [string, ReactNode][] = [
  ["Normals", <Normal />], ["HPR", <Hpr />], ["M3C2", <M3 />], ["Shield", <Shield />], ["PCV", <Pcv />], ["Poisson", <Penta />], ["RSD", <Rsd />],
  ["Gears", <Gears />], ["Layers", <Layers />], ["Ellipse", <Ellipse />], ["Bridge", <Bridge />], ["Hand", <Hand />], ["Ruler", <CloudRuler />],
];
const editTools: [string, ReactNode][] = [["Pick", <Target />], ["List", <ListIcon />], ["Trace", <PlusPath />], ["Merge", <Sheep />], ["Subtract", <Subtract />], ["Delete", <Cross />]];
const cloudTools: [string, ReactNode][] = [["Register", <Curve />], ["Orient", <Rock />], ["Subsample", <Sample />], ["Sample mesh", <SampleBox />], ["Cloud distance", <Reg />], ["Mesh distance", <Reg tri />], ["Primitive distance", <Reg />]];
const fieldTools: [string, ReactNode][] = [["Min max", <MinMax />], ["Delete field", <Trash />], ["Add field", <Plus />], ["Arithmetic", <Calc />], ["Color scale", <SF />]];
const apps: { n: string; i: ReactNode; dot?: string; bg?: string; wide?: boolean }[] = [
  { n: "Start", i: <Win /> }, { n: "Search", i: <Search /> }, { n: "Task view", i: <TaskView /> }, { n: "Terminal", i: <Cmd /> },
  { n: "Edge", i: <Edge />, dot: "#8a8a8a" }, { n: "Chrome", i: <Chrome />, dot: "#8a8a8a" }, { n: "WeChat", i: <Wechat />, dot: "#c42b1c", bg: "#fde7e7" },
  { n: "PyCharm", i: <PyCharm />, dot: "#8a8a8a" }, { n: "Notes", i: <Bird />, dot: "#8a8a8a" }, { n: "Word", i: <Word />, dot: "#8a8a8a" },
  { n: "Visio", i: <Visio />, dot: "#8a8a8a" }, { n: "CloudCompare", i: <Logo s={48} />, dot: "#0078d4", bg: "#fafafa", wide: true },
];
const maps: [string, string][] = [
  ["Point X", "vertex - x [PLY_DOUBLE]"], ["Point Y", "vertex - y [PLY_DOUBLE]"], ["Point Z", "vertex - z [PLY_DOUBLE]"],
  ["Red", "vertex - red [PLY_UCHAR]"], ["Green", "vertex - green [PLY_UCHAR]"], ["Blue", "vertex - blue [PLY_UCHAR]"],
  ["Intensity", "None"], ["Nx", "None"], ["Ny", "None"], ["Nz", "None"], ["Faces", "None"], ["Texture coordinates", "None"], ["Texture index", "None"],
];
const logs = [
  "[16:48:23] [3D View 1] Stereo mode: not supported",
  "[16:48:23] [ccGLWindow] 3D view initialized",
  "[16:48:23] [ccGLWindow] Succesfully initialized PBO for faster depth picking",
  "[16:48:23] [Global Shift] Max abs. coord = 1e+04 / max abs. diag = 1e+06",
  "[16:56:12] [PLY][Comment] Created by Open3D",
];
const menus = ["编辑(E)", "工具类(T)", "显示(D)", "插件(P)", "3D视图(V)", "帮助(H)"];
const behind: [number, string, boolean?][] = [
  [183, "#fff"], [64, "#3b55a5"], [92, "#f3f3f3"], [18, "#e5e5e5"], [17, "#fff", true], [224, "#f3f3f3"], [356, "#fff", true],
  [212, "#f3f3f3", true], [18, "#fff", true], [30, "#e5e5e5"], [47, "#f0f0f0"],
];

const Tools = ({ items }: { items: [string, ReactNode][] }) => (
  <>{items.map(([n, i]) => <ToolButton type="button" key={n} aria-label={n}>{i}</ToolButton>)}</>
);
const SideTools = ({ items }: { items: [string, ReactNode][] }) => (
  <>{items.map(([n, i]) => {
    const on = n === "Auto-pick center";
    return <SideButton type="button" key={n} aria-label={n} aria-pressed={on} $on={on}>{i}</SideButton>;
  })}</>
);
const CloseGlyph = ({ s, c, w }: { s: number; c: string; w: number }) => (
  <svg width={s} height={s} viewBox="0 0 16 16" aria-hidden="true"><path d="M1 1l14 14M15 1L1 15" stroke={c} strokeWidth={w} /></svg>
);

function PlyDialog() {
  return (
    <Dialog aria-label="Ply File Open" onSubmit={e => e.preventDefault()}>
      <DialogTitle>
        <Logo s={20} c="#2b79a8" />
        Ply File Open
        <Spacer />
        <PlainButton type="button">?</PlainButton>
        <TrayGap />
        <PlainButton type="button" aria-label="Close dialog"><CloseGlyph s={16} c="#111" w={1.4} /></PlainButton>
      </DialogTitle>
      <DialogBody>
        <FieldRow>
          <Label htmlFor="type">Type</Label>
          <TextBox id="type" readOnly value="PLY_LITTLE_ENDIAN" />
        </FieldRow>
        <FieldRow>
          <Label htmlFor="elements">Elements</Label>
          <TextBox id="elements" readOnly value="1" />
          <Label htmlFor="props" $gap $kana>プロパティ</Label>
          <TextBox id="props" readOnly value="6" />
          <Label htmlFor="textures" $gap>Textures</Label>
          <TextBox id="textures" readOnly value="0" />
        </FieldRow>
        <Mappings>
          {maps.map(([label, value], i) => (
            <React.Fragment key={label}>
              <MapLabel htmlFor={`map${i}`}>{label}</MapLabel>
              <SelectWrap>
                <Select id={`map${i}`} defaultValue={value}><option>{value}</option></Select>
                <Chevron />
              </SelectWrap>
            </React.Fragment>
          ))}
        </Mappings>
        <Fields>
          <Legend>Scalar fields</Legend>
          <FieldList />
          <AddRow><Button type="button" $w={72}>Add</Button></AddRow>
        </Fields>
        <Actions>
          <Button type="submit" $w={148} $main>应用</Button>
          <Button type="button" $w={148}>应用全部</Button>
          <Button type="button" $w={148}>取消</Button>
        </Actions>
      </DialogBody>
      <Arrow width="164" height="204" viewBox="0 0 164 204" aria-hidden="true">
        <path d="M160 2L162 3 20 192 11 184z" fill="#ff2116" />
        <path d="M1 204L4 183l5 4 9 7 5 2z" fill="#ff2116" />
      </Arrow>
    </Dialog>
  );
}

export default function App() {
  return (
    <>
      <GlobalStyle />
      <Desktop>
        <Behind>{behind.map(([h, c, e], i) => <Slice key={i} $h={h} $c={c} $edge={e} />)}</Behind>
        <Screen>
          <TitleBar>
            <Logo s={22} />
            {"CloudCompare v2.13.alpha (Apr  2 2023) [64-bit] - [3D View 1]"}
            <Spacer />
            <WindowButtons>
              <PlainButton type="button" aria-label="Minimize"><svg width="22" height="16"><path d="M3 8h16" stroke="#777" strokeWidth="1.500" /></svg></PlainButton>
              <PlainButton type="button" aria-label="Restore"><svg width="22" height="16"><path d="M4 4h11v11H4zM7 4V1h11v11h-3" fill="none" stroke="#777" strokeWidth="1.500" /></svg></PlainButton>
              <PlainButton type="button" aria-label="Close"><CloseGlyph s={16} c="#777" w={1.4} /></PlainButton>
            </WindowButtons>
          </TitleBar>
          <MenuBar>
            <MenuLead><Logo s={30} /><MenuItem type="button">文件(F)</MenuItem></MenuLead>
            {menus.map(m => <MenuItem type="button" key={m}>{m}</MenuItem>)}
          </MenuBar>
          <TopBars>
            <BarGroup>
              <Grip />
              <Tools items={[["Open", <Folder />], ["Save", <Floppy />]]} />
              <Separator />
              <Tools items={editTools} />
              <Separator />
              <Tools items={cloudTools} />
              <Spacer />
              <Tools items={fieldTools} />
            </BarGroup>
            <BarGroup $w={148}><Grip /><Tools items={[["Create", <Canupo word="Create" />], ["Classify", <Canupo word="Classify" />]]} /></BarGroup>
            <BarGroup $w={138}><Grip /><Tools items={[["Kd", <Kd />]]} /><More type="button">»</More></BarGroup>
            <BarGroup $w={110}><Grip /><Tools items={[["Facets", <Puzzle />]]} /><More type="button">»</More></BarGroup>
            <BarGroup $w={110}><Grip /><Tools items={[["Section", <Section />]]} /><More type="button">»</More></BarGroup>
            <BarGroup $w={111}><Grip /><Tools items={[["RGB", <RGB />]]} /><More type="button">»</More></BarGroup>
          </TopBars>
          <Body>
            <SideBar $w={69}><Grip $flat /><SideTools items={leftTools} /></SideBar>
            <Center>
              <Upper>
                <LeftDock>
                  <DockHeader>DB树<Spacer /><PlainButton type="button" aria-label="Float DB tree"><Restore /></PlainButton></DockHeader>
                  <DockBody $fill="#fff" />
                  <DockHeader>属性<Spacer /><PlainButton type="button" aria-label="Float properties"><Restore /></PlainButton></DockHeader>
                  <DockBody $grow $fill="#f0f0f0" />
                </LeftDock>
                <View>
                  <Notice>{"default point size\ndefault line width"}</Notice>
                  <ScaleOverlay width="490" height="110" viewBox="0 0 490 110">
                    <path d="M10 60.500h372M10.500 57v7M381.500 57v7" stroke="#fff" strokeWidth="1.500" />
                    <text x="196" y="90" fontSize="22" fill="#fff" textAnchor="middle">0.2</text>
                    <path d="M437.500 38v24" stroke="#0f0" strokeWidth="3" />
                    <path d="M439 62h24" stroke="#f00" strokeWidth="3" />
                    <text x="437" y="32" fontSize="22" fill="#0f0" textAnchor="middle">Y</text>
                    <text x="437" y="70" fontSize="22" fill="#1aa7ff" textAnchor="middle">Z</text>
                    <text x="476" y="70" fontSize="22" fill="#f00" textAnchor="middle">X</text>
                  </ScaleOverlay>
                </View>
              </Upper>
              <Console>
                <DockHeader>
                  控制台<Spacer />
                  <PlainButton type="button" aria-label="Float console"><Restore /></PlainButton>
                  <PlainButton type="button" aria-label="Close console"><CloseGlyph s={15} c="#333" w={3.5} /></PlainButton>
                </DockHeader>
                <LogBox>
                  <LogList>{logs.map(l => <LogLine key={l}>{l}</LogLine>)}</LogList>
                  <LogScroll><LogThumb /></LogScroll>
                </LogBox>
              </Console>
            </Center>
            <SideBar $w={166} $right>
              <Grip $flat />
              <PluginStack>
                <SideTools items={[["No filter", <NoSign />], ["EDL", <Shade word="EDL" />], ["SSAO", <Shade word="SSAO" />]]} />
              </PluginStack>
              <SideRule />
              <Grip $flat />
              <PluginStack>
                <SideTools items={pluginTop} />
                <SideText type="button">CSF Filter</SideText>
                <SideTools items={pluginRest} />
              </PluginStack>
            </SideBar>
          </Body>
          <TaskBar>
            <Weather>
              <svg width="38" height="44" viewBox="0 0 38 44" aria-hidden="true">
                <defs><linearGradient id="sun" x1="0" y1="0" x2="1" y2="1"><stop stopColor="#f3b528" /><stop offset="1" stopColor="#ee5f0c" /></linearGradient></defs>
                <circle cx="16" cy="27" r="15" fill="url(#sun)" /><circle cx="26" cy="13" r="12" fill="#c42b1c" />
                <text x="26" y="19" fontSize="16" fill="#fff" textAnchor="middle">1</text>
              </svg>
              <div>31°C<Second>晴朗</Second></div>
            </Weather>
            <Apps>
              {apps.map(a => (
                <AppButton type="button" key={a.n} aria-label={a.n} $dot={a.dot} $bg={a.bg} $wide={a.wide}>
                  <AppGlyph>{a.i}</AppGlyph>
                </AppButton>
              ))}
            </Apps>
            <Tray>
              <svg width="18" height="12" viewBox="0 0 18 12" aria-hidden="true"><path d="M1 11l8-9 8 9" fill="none" stroke="#222" strokeWidth="2" /></svg>
              <TrayGap />
              <InputMode type="button">英</InputMode>
              <svg width="26" height="22" viewBox="0 0 26 22" fill="none" stroke="#222" strokeWidth="2" aria-hidden="true"><path d="M1 8q12-12 24 0M5 12q8-8 16 0M9 16q4-4 8 0" /><circle cx="13" cy="19" r="1.500" fill="#222" /></svg>
              <svg width="24" height="22" viewBox="0 0 24 22" fill="none" stroke="#222" strokeWidth="1.800" aria-hidden="true"><path d="M1 8h4l6-6v18l-6-6H1zM14 7q3 4 0 8" /><path d="M17 4q5 7 0 14M20 2q6 9 0 18" stroke="#bbb" /></svg>
              <svg width="26" height="22" viewBox="0 0 26 22" aria-hidden="true"><rect x="2" y="5" width="20" height="14" rx="3" fill="none" stroke="#222" strokeWidth="2" /><path d="M5 11l6-3h8v8H5zM23 9h3v6h-3zM5 0L1 8h3L2 14l7-8H6z" fill="#222" /></svg>
              <Clock>16:57<br />2023-05-18</Clock>
            </Tray>
            <Watermark>CSDN @不知名CVer</Watermark>
          </TaskBar>
        </Screen>
        <EdgeThumb />
        <PlyDialog />
      </Desktop>
    </>
  );
}
